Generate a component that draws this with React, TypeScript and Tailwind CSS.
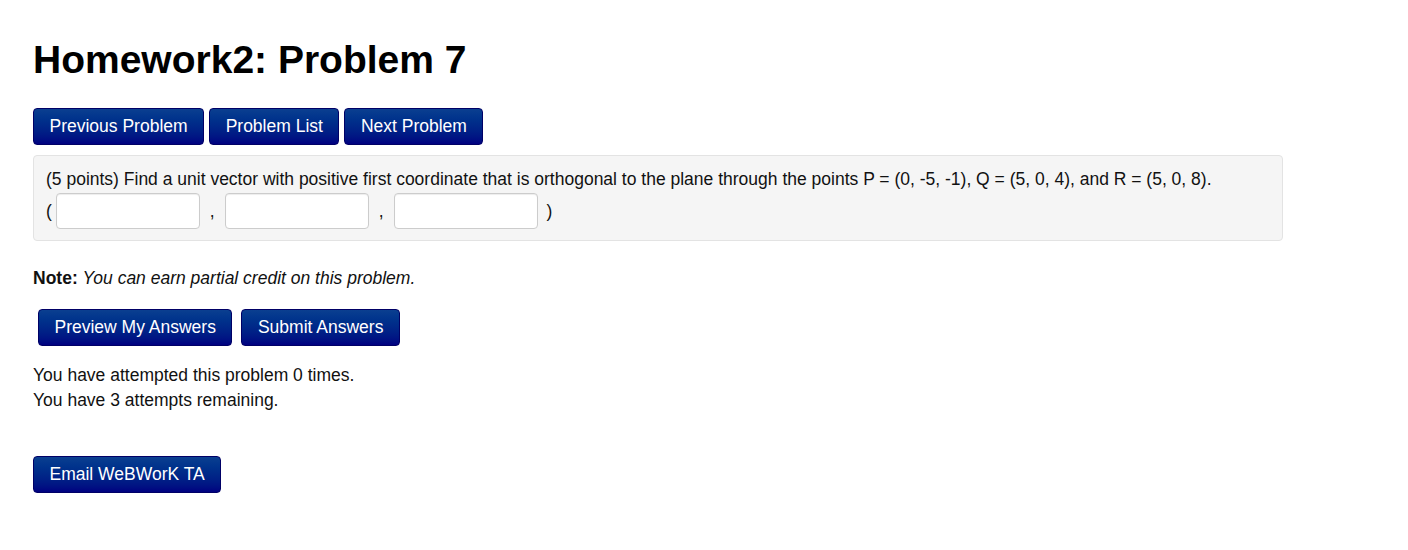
import React from 'react';

const Btn = ({ children, className = '' }: { children: React.ReactNode; className?: string }) => (
  <button
    className={`h-[37px] px-[15.5px] rounded-[4px] border border-[#000066] bg-gradient-to-b from-[#0b3f90] to-[#000080] text-white text-[17.5px] leading-none ${className}`}
  >
    {children}
  </button>
);

const Blank = () => (
  <input
    type="text"
    className="w-[144px] h-[36px] rounded-[4px] border border-[#cccccc] bg-white shadow-[inset_0_1px_1px_rgba(0,0,0,0.075)]"
  />
);

export default function App() {
  return (
    <div className="min-h-[550px] bg-white pl-[33px] pt-[36px] text-[17.5px] text-[#111] font-['Liberation_Sans',Arial,sans-serif]">
      <h1 className="text-[39px] font-bold leading-[48px] text-black">Homework2: Problem 7</h1>

      <div className="mt-[24px] flex gap-[5px]">
        <Btn>Previous Problem</Btn>
        <Btn>Problem List</Btn>
        <Btn>Next Problem</Btn>
      </div>

      <div className="mt-[10px] w-[1250px] rounded-[4px] border border-[#e3e3e3] bg-[#f5f5f5] px-[12px] pt-[11px] pb-[11px]">
        <div className="leading-[24px]">
          (5 points) Find a unit vector with positive first coordinate that is orthogonal to the plane through the points P = (0, -5, -1), Q = (5, 0, 4), and R = (5, 0, 8).
        </div>
        <div className="flex items-center h-[36px] mt-[2px]">
          <span className="mr-[4px]">(</span>
          <Blank />
          <span className="mx-[10px]">,</span>
          <Blank />
          <span className="mx-[10px]">,</span>
          <Blank />
          <span className="ml-[9px]">)</span>
        </div>
      </div>

      <div className="mt-[25px] leading-[24px]">
        <b>Note:</b> <i>You can earn partial credit on this problem.</i>
      </div>

      <div className="mt-[19px] ml-[5px] flex gap-[9px]">
        <Btn>Preview My Answers</Btn>
        <Btn>Submit Answers</Btn>
      </div>

      <div className="mt-[17px] leading-[25px]">
        <div>You have attempted this problem 0 times.</div>
        <div>You have 3 attempts remaining.</div>
      </div>

      <div className="mt-[43px]">
        <Btn>Email WeBWorK TA</Btn>
      </div>
    </div>
  );
}
